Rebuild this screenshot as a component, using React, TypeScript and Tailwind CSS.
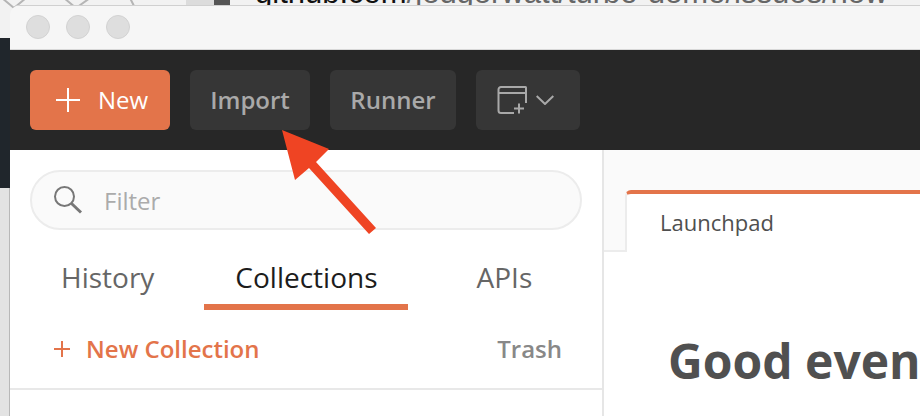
const font = { fontFamily: '"Open Sans", sans-serif' };

function Plus({ size, className }: { size: number; className?: string }) {
  return (
    <svg width={size} height={size} viewBox={`0 0 ${size} ${size}`} className={className} fill="none" stroke="currentColor" strokeWidth="2">
      <path d={`M0 ${size / 2}H${size}M${size / 2} 0V${size}`} />
    </svg>
  );
}

function ToolbarButton({ label, width }: { label: string; width: string }) {
  return (
    <button className={`${width} h-[60px] rounded-md bg-[#363636] text-[24px] font-semibold text-[#a9a9a9] flex items-center justify-center`}>
      {label}
    </button>
  );
}

function TitleBar() {
  return (
    <div className="h-[45px] shrink-0 bg-[#f6f6f6] border-t border-t-[#d0d0d0] border-b border-b-[#d8d8d8] flex items-center gap-4 pl-4 pb-[1px]">
      <span className="w-6 h-6 rounded-full bg-[#dedede] border border-[#d2d2d2]" />
      <span className="w-6 h-6 rounded-full bg-[#dedede] border border-[#d2d2d2]" />
      <span className="w-6 h-6 rounded-full bg-[#dedede] border border-[#d2d2d2]" />
    </div>
  );
}

function Toolbar() {
  return (
    <div className="h-[100px] shrink-0 bg-[#272727] flex items-center gap-5 pl-5">
      <button className="w-[140px] h-[60px] rounded-md bg-[#e3744a] text-[24px] font-medium text-white flex items-center pl-[26px] gap-[18px]">
        <Plus size={24} />
        New
      </button>
      <ToolbarButton label="Import" width="w-[120px]" />
      <ToolbarButton label="Runner" width="w-[126px]" />
      <button className="w-[104px] h-[60px] rounded-md bg-[#363636] flex items-center pl-[21px] gap-[9px] text-[#a9a9a9]">
        <svg width="30" height="30" viewBox="0 0 30 30" fill="none" stroke="currentColor" strokeWidth="2">
          <path d="M17 28H4a2.500 2.500 0 0 1-2.500-2.500V4.500A2.500 2.500 0 0 1 4 2h24.500a.5.5 0 0 1 .5.500V18" />
          <path d="M1.500 8H29M22 18.500V28.500M17 23.500H27" />
        </svg>
        <svg width="18" height="10" viewBox="0 0 18 10" fill="none" stroke="currentColor" strokeWidth="2">
          <path d="M.7 1 9 9l8.300-8" />
        </svg>
      </button>
    </div>
  );
}

function Sidebar() {
  return (
    <div className="w-[594px] shrink-0 border-r-2 border-[#e6e6e6] bg-white">
      <div className="pt-5 pl-5 pr-[20px]">
        <div className="h-[60px] rounded-full bg-[#fafafa] border-2 border-[#ececec] flex items-center pl-[21px] gap-[21px] text-[24px] text-[#ababab]">
          <svg width="30" height="30" viewBox="0 0 30 30" fill="none" stroke="#777" strokeWidth="2">
            <circle cx="11.500" cy="11.500" r="9.500" />
            <path d="m18.500 18.500 9.500 9" strokeWidth="3" />
          </svg>
          <span className="translate-y-px">Filter</span>
        </div>
      </div>
      <div className="relative h-[74px] pt-5 flex items-center text-[28px] text-[#666]">
        <span className="ml-[51px]">History</span>
        <span className="ml-[81px] text-[#1c1c1c]">Collections</span>
        <span className="ml-[99px]">APIs</span>
        <span className="absolute left-[194px] top-[74px] w-[204px] h-1.5 bg-[#e3744a]" />
      </div>
      <div className="h-[82px] mt-1 border-b-2 border-[#e8e8e8] flex items-center pl-11 pr-[40px] pt-[1px] text-[24px] font-semibold">
        <Plus size={16} className="text-[#e3744a]" />
        <span className="ml-[16px] text-[#e3744a]">New Collection</span>
        <span className="ml-auto text-[#888]">Trash</span>
      </div>
    </div>
  );
}

function Main() {
  return (
    <div className="flex-1 min-w-0 bg-white">
      <div className="h-[100px] bg-[#fafafa] flex items-end pl-[21px] border-b-2 border-[#ececec] box-content">
        <div className="relative -mb-0.5 flex-1 h-[62px] bg-white border-t-4 border-[#e3744a] border-l-2 border-l-[#ececec] rounded-tl-md pl-[33px] pt-[12px] text-[22px] text-[#4f4f4f]">
          Launchpad
        </div>
      </div>
      <h1 className="mt-[76px] ml-[64px] whitespace-nowrap text-[48px] leading-[66px] font-bold text-[#505050]">
        Good evening
      </h1>
    </div>
  );
}

function Desktop() {
  return (
    <div className="absolute inset-0 bg-[#e9e9e9] overflow-hidden">
      <div className="h-[38px] bg-[#f2f2f2]" />
      <div className="h-[150px] w-[10px] bg-[#20262c]" />
      <div className="h-[228px] w-[10px] bg-[#e3e3e3] border-r border-[#b8b8b8]" />
      <span className="absolute left-[214px] top-0 w-4 h-[5px] bg-[#555]" />
      <span className="absolute left-[186px] top-0 w-7 h-[5px] bg-[#dcdcdc]" />
      <svg className="absolute left-0 top-0" width="160" height="12" fill="none" stroke="#b5b5b5" strokeWidth="2">
        <path d="M2 -2 14 8 26 -2M64 -2 76 8 90 -2M130 -2 134 6" />
      </svg>
      <p
        className="absolute left-[255px] top-[-30px] whitespace-nowrap text-[31px] text-[#666]"
        style={{ fontFamily: '"Liberation Sans", sans-serif' }}
      >
        <span className="text-[#111]">github.com</span>/jedgerwatt/turbo-demo/issues/new
      </p>
    </div>
  );
}

export default function App() {
  return (
    <div className="relative w-[920px] h-[416px] overflow-hidden" style={font}>
      <Desktop />
      <div className="absolute left-[10px] top-[5px] right-0 bottom-0 flex flex-col rounded-tl-[10px] overflow-hidden">
        <TitleBar />
        <Toolbar />
        <div className="flex flex-1 min-h-0">
          <Sidebar />
          <Main />
        </div>
      </div>
      <svg className="absolute left-0 top-0 pointer-events-none" width="920" height="416" fill="#ef4423">
        <path d="M282 130 329 149 316 162 376 228 369 234 309 168 295 180Z" />
      </svg>
    </div>
  );
}
